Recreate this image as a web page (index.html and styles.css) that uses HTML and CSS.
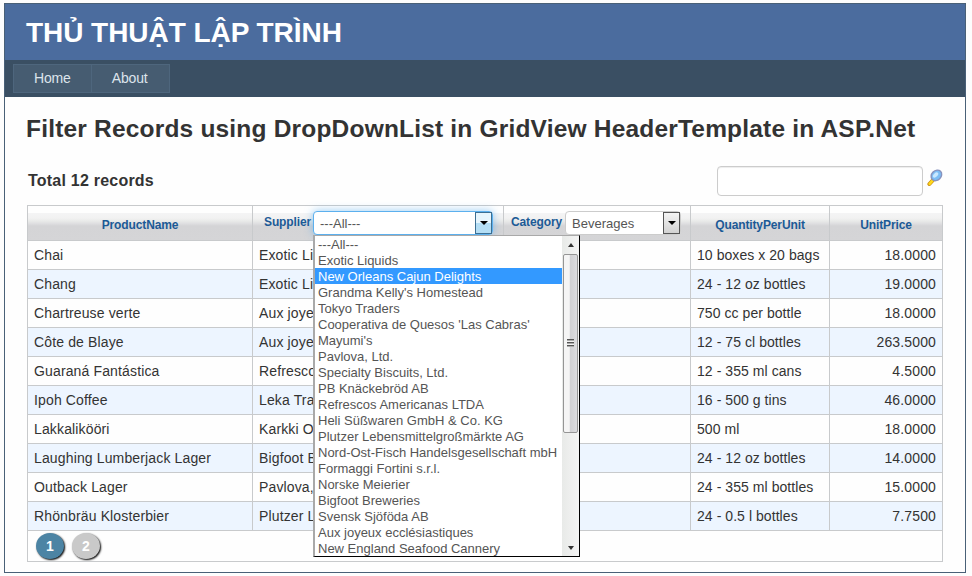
FILE: index.html
```html
<!DOCTYPE html>
<html lang="vi">
<head>
  <meta charset="UTF-8">
  <title>Filter Records using DropDownList</title>
  <link rel="stylesheet" href="styles.css">
</head>
<body>
  <div class="page">
    <div class="header">
      <h1>THỦ THUẬT LẬP TRÌNH</h1>
    </div>
    <div class="menu">
      <a class="menu-item">Home</a>
      <a class="menu-item">About</a>
    </div>
    <div class="main">
      <h2>Filter Records using DropDownList in GridView HeaderTemplate in ASP.Net</h2>

      <div class="toolbar">
        <span class="total">Total 12 records</span>
        <div class="search">
          <input type="text" class="search-box">
          <svg class="search-icon" width="16" height="18" viewBox="0 0 16 18">
            <path d="M6.5 10.5L2.4 15" stroke="#c98a10" stroke-width="4" stroke-linecap="round"/>
            <path d="M6.3 10.7L2.6 14.8" stroke="#ffd91a" stroke-width="2.6" stroke-linecap="round"/>
            <ellipse cx="9.4" cy="6.4" rx="5.8" ry="4.7" transform="rotate(-45 9.4 6.4)" fill="#7cbdf5" stroke="#8792bd" stroke-width="1.4"/>
            <ellipse cx="8.6" cy="6" rx="3.2" ry="1.9" transform="rotate(-45 8.6 6)" fill="#c9e8ff"/>
          </svg>
        </div>
      </div>

      <table class="grid">
        <colgroup>
          <col class="c-name"><col class="c-supplier"><col class="c-category"><col class="c-qty"><col class="c-price">
        </colgroup>
        <tr class="grid-head">
          <th>ProductName</th>
          <th>
            <div class="filter filter-supplier">
              <span class="filter-label">Supplier</span>
              <div class="select focused">
                <span>---All---</span>
                <i class="arrow"></i>
              </div>
              <div class="dropdown">
                <ul class="options">
                  <li>---All---</li>
                  <li>Exotic Liquids</li>
                  <li class="selected">New Orleans Cajun Delights</li>
                  <li>Grandma Kelly's Homestead</li>
                  <li>Tokyo Traders</li>
                  <li>Cooperativa de Quesos 'Las Cabras'</li>
                  <li>Mayumi's</li>
                  <li>Pavlova, Ltd.</li>
                  <li>Specialty Biscuits, Ltd.</li>
                  <li>PB Knäckebröd AB</li>
                  <li>Refrescos Americanas LTDA</li>
                  <li>Heli Süßwaren GmbH &amp; Co. KG</li>
                  <li>Plutzer Lebensmittelgroßmärkte AG</li>
                  <li>Nord-Ost-Fisch Handelsgesellschaft mbH</li>
                  <li>Formaggi Fortini s.r.l.</li>
                  <li>Norske Meierier</li>
                  <li>Bigfoot Breweries</li>
                  <li>Svensk Sjöföda AB</li>
                  <li>Aux joyeux ecclésiastiques</li>
                  <li>New England Seafood Cannery</li>
                </ul>
                <div class="scrollbar">
                  <i class="up"></i>
                  <div class="thumb"><i class="grip"></i></div>
                  <i class="down"></i>
                </div>
              </div>
            </div>
          </th>
          <th>
            <div class="filter filter-category">
              <span class="filter-label">Category</span>
              <div class="select">
                <span>Beverages</span>
                <i class="arrow"></i>
              </div>
            </div>
          </th>
          <th>QuantityPerUnit</th>
          <th>UnitPrice</th>
        </tr>
        <tr><td>Chai</td><td>Exotic Liquids</td><td></td><td class="qty">10 boxes x 20 bags</td><td class="price">18.0000</td></tr>
        <tr class="alt"><td>Chang</td><td>Exotic Liquids</td><td></td><td class="qty">24 - 12 oz bottles</td><td class="price">19.0000</td></tr>
        <tr><td>Chartreuse verte</td><td>Aux joyeux ecclésiastiques</td><td></td><td class="qty">750 cc per bottle</td><td class="price">18.0000</td></tr>
        <tr class="alt"><td>Côte de Blaye</td><td>Aux joyeux ecclésiastiques</td><td></td><td class="qty">12 - 75 cl bottles</td><td class="price">263.5000</td></tr>
        <tr><td>Guaraná Fantástica</td><td>Refrescos Americanas LTDA</td><td></td><td class="qty">12 - 355 ml cans</td><td class="price">4.5000</td></tr>
        <tr class="alt"><td>Ipoh Coffee</td><td>Leka Trading</td><td></td><td class="qty">16 - 500 g tins</td><td class="price">46.0000</td></tr>
        <tr><td>Lakkalikööri</td><td>Karkki Oy</td><td></td><td class="qty">500 ml</td><td class="price">18.0000</td></tr>
        <tr class="alt"><td>Laughing Lumberjack Lager</td><td>Bigfoot Breweries</td><td></td><td class="qty">24 - 12 oz bottles</td><td class="price">14.0000</td></tr>
        <tr><td>Outback Lager</td><td>Pavlova, Ltd.</td><td></td><td class="qty">24 - 355 ml bottles</td><td class="price">15.0000</td></tr>
        <tr class="alt"><td>Rhönbräu Klosterbier</td><td>Plutzer Lebensmittelgroßmärkte AG</td><td></td><td class="qty">24 - 0.5 l bottles</td><td class="price">7.7500</td></tr>
        <tr class="pager">
          <td colspan="5">
            <div class="pages">
              <span class="page-no current">1</span>
              <span class="page-no">2</span>
            </div>
          </td>
        </tr>
      </table>
    </div>
  </div>
</body>
</html>
```
FILE: styles.css
```css
* {
  box-sizing: border-box;
}
body {
  margin: 0;
  padding: 3px 6px 3px 4px;
  background: #fdfdfd;
  font-family: "Liberation Sans", Arial, sans-serif;
  font-size: 14px;
  color: #333;
}
.page {
  height: 570px;
  border: 1px solid #496077;
  background: #fefefe;
}
.header {
  height: 56px;
  padding-left: 21px;
  background: #4b6c9e;
}
h1 {
  margin: 0;
  font-size: 28px;
  line-height: 58px;
  letter-spacing: -0.05px;
  color: #fff;
}
.menu {
  display: flex;
  height: 37px;
  padding: 4px 8px;
  background: #3a4f63;
}
.menu-item {
  height: 29px;
  padding: 0 20px;
  border: 1px solid #4e667d;
  background: #465c71;
  color: #dde4ec;
  line-height: 26px;
  letter-spacing: -0.15px;
}
.menu-item + .menu-item {
  padding-right: 21px;
  border-left: none;
}
.main {
  padding: 18px 22px 0;
}
h2 {
  margin: -1px 0 1px -1px;
  font-size: 24.5px;
  line-height: 30px;
  letter-spacing: 0.19px;
  white-space: nowrap;
}
.toolbar {
  display: flex;
  justify-content: space-between;
  height: 60px;
  padding-top: 21px;
}
.total {
  padding-left: 1px;
  font-size: 16px;
  font-weight: bold;
  line-height: 30px;
  letter-spacing: 0.22px;
}
.search {
  display: flex;
  gap: 4px;
}
.search-box {
  width: 206px;
  height: 30px;
  border: 1px solid #ccc;
  border-radius: 4px;
  background: #fff;
  box-shadow: inset 0 1px 1px rgba(0,0,0,0.075);
}
.search-icon {
  margin-top: 3px;
}

/* grid */
.grid {
  width: 916px;
  table-layout: fixed;
  border-collapse: separate;
  border-spacing: 0;
  border-left: 1px solid #c8cacc;
  border-top: 1px solid #c8cacc;
}
.c-name { width: 225px; }
.c-supplier { width: 251px; }
.c-category { width: 187px; }
.c-qty { width: 139px; }
.c-price { width: 113px; }
.grid th, .grid td {
  padding: 0 6px;
  border-right: 1px solid #c8cacc;
  border-bottom: 1px solid #c8cacc;
}
.grid th {
  height: 35px;
  padding-top: 4px;
  background: linear-gradient(#fefefe 0, #fefefe 7px, #f4f4f5 7px, #f2f2f2 12px, #e9eae9 15px, #dddddf 18px, #d4d4d6 20px, #d5d5d7 100%);
  color: #1c5a96;
  font-size: 12px;
  letter-spacing: -0.12px;
}
.grid td {
  height: 29px;
  line-height: 28px;
  letter-spacing: 0.14px;
  white-space: nowrap;
  overflow: hidden;
}
.grid .alt td {
  background: #edf5ff;
}
.grid .qty {
  letter-spacing: 0.06px;
}
.grid .price {
  text-align: right;
}

/* filter lists in the header */
.filter {
  position: relative;
  display: flex;
  height: 24px;
  margin-top: -5px;
}
.filter-supplier {
  padding-left: 5px;
}
.filter-category {
  padding-left: 1px;
}
.filter-label {
  width: 49px;
  text-align: left;
  line-height: 22px;
}
.filter-category .filter-label {
  width: 54px;
}
.select {
  display: flex;
  justify-content: space-between;
  width: 116px;
  height: 24px;
  padding: 0 0 0 6px;
  border: 1px solid #ccc;
  border-radius: 4px;
  background: #fff;
  color: #555;
  font-size: 13px;
  font-weight: normal;
  line-height: 24px;
  letter-spacing: 0;
}
.focused {
  width: 180px;
  border-color: #5cb0ee;
  box-shadow: 0 0 8px rgba(82,168,236,0.6);
}
.arrow {
  width: 17px;
  height: 22px;
  border: 1px solid #555;
  background: linear-gradient(#f4f4f4, #d2d2d2);
}
.focused .arrow {
  border-color: #3c6f93;
  background: linear-gradient(#e6f5fd 50%, #b4def5 50%);
}
.arrow::before {
  content: "";
  display: block;
  margin: 8px auto 0;
  width: 0;
  border: 4px solid transparent;
  border-top-color: #000;
  border-bottom: none;
}
.dropdown {
  position: absolute;
  left: 54px;
  top: 24px;
  z-index: 10;
  display: flex;
  width: 267px;
  height: 322px;
  border: solid;
  border-width: 1px 1px 1px 2px;
  border-color: #a9a9a9 #000 #000 #a9a9a9;
  background: #fff;
}
.options {
  width: 247px;
  margin: 0;
  padding: 0;
  list-style: none;
}
.options li {
  height: 16px;
  padding-left: 3px;
  color: #555;
  font-size: 13px;
  font-weight: normal;
  line-height: 17px;
  letter-spacing: 0;
  text-align: left;
  white-space: nowrap;
}
.options .selected {
  background: #3399ff;
  color: #fff;
}
.scrollbar {
  display: flex;
  flex-direction: column;
  align-items: center;
  width: 17px;
  background: linear-gradient(90deg, #e8eae8, #f4f4f4);
}
.up, .down {
  border: 3px solid transparent;
}
.up {
  margin-top: 7px;
  border-top: none;
  border-bottom: 4px solid #333;
}
.thumb {
  display: flex;
  align-items: center;
  justify-content: center;
  width: 15px;
  height: 179px;
  margin-top: 7px;
  border: 1px solid #959595;
  border-radius: 2px;
  background: linear-gradient(90deg, #f5f5f5 40%, #d0d0d3 50%, #dcdcdf);
}
.grip {
  width: 7px;
  height: 8px;
  background: repeating-linear-gradient(#555 0, #555 1px, #aaa 1px, #aaa 2px, #f2f2f2 2px, #f2f2f2 3px);
}
.down {
  margin-top: auto;
  margin-bottom: 6px;
  border-bottom: none;
  border-top: 4px solid #333;
}

/* pager */
.grid .pager td {
  height: 31px;
  padding: 0 8px;
}
.pages {
  display: flex;
  gap: 8px;
  height: 30px;
  padding-top: 2px;
}
.page-no {
  width: 28px;
  height: 26px;
  border-radius: 50%;
  background: #c9c9c9;
  box-shadow: 1px 1px 2px #000;
  color: #fff;
  font-size: 14px;
  font-weight: bold;
  line-height: 27px;
  text-align: center;
}
.current {
  background: #4c84a4;
}
```
